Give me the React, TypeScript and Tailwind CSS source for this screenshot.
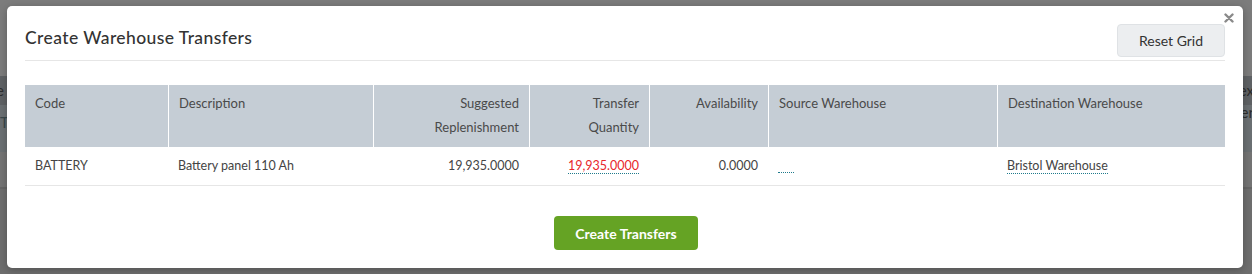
import React from "react";

const font = { fontFamily: '"Lato", "Open Sans", sans-serif' };

const columns = [
  { key: "code", label: ["Code"], w: "w-[143px]", align: "text-left" },
  { key: "desc", label: ["Description"], w: "w-[205px]", align: "text-left" },
  { key: "sugg", label: ["Suggested", "Replenishment"], w: "w-[156px]", align: "text-right" },
  { key: "qty", label: ["Transfer", "Quantity"], w: "w-[120px]", align: "text-right" },
  { key: "avail", label: ["Availability"], w: "w-[119px]", align: "text-right" },
  { key: "src", label: ["Source Warehouse"], w: "w-[229px]", align: "text-left" },
  { key: "dest", label: ["Destination Warehouse"], w: "flex-1", align: "text-left" },
];

function Backdrop() {
  return (
    <div className="absolute inset-0 flex flex-col bg-[#7b7b7b]">
      <div className="h-[76px] bg-[#7c7c7c]" />
      <div className="flex h-[29px] items-center justify-between bg-[#5f6265] text-[15px] text-[#2d2d2d]">
        <span className="-ml-[4px]">e</span>
        <span className="-mr-[2px]">ex</span>
      </div>
      <div className="flex h-[47px] items-start justify-between bg-[#6b7073] pt-[6px] text-[15px] text-[#39474b]">
        <span>T</span>
        <span className="-mr-[2px] -mt-[10px] text-[#2d2d2d]">er</span>
      </div>
      <div className="h-[35px] bg-[#747474]" />
      <div className="h-[2px] bg-[#666]" />
      <div className="flex-1 bg-[#6e6e6e]" />
    </div>
  );
}

function CloseIcon() {
  return (
    <svg width="10" height="10" viewBox="0 0 10 10">
      <path d="M1.5 1.5 L8.5 8.5 M8.5 1.5 L1.5 8.5" stroke="#8a8a8a" strokeWidth="2.4" strokeLinecap="round" />
    </svg>
  );
}

export default function App() {
  return (
    <div className="relative h-[274px] w-[1252px] overflow-hidden" style={font}>
      <Backdrop />
      <div className="absolute left-[7px] top-[6px] flex h-[262px] w-[1236px] flex-col rounded-[5px] bg-white px-[18px] shadow-[0_2px_8px_rgba(0,0,0,0.25)]">
        <button className="absolute right-[9px] top-[7px] leading-none">
          <CloseIcon />
        </button>
        <div className="flex h-[55px] items-end justify-between border-b border-[#e6e6e6] pb-[3px]">
          <h1 className="pb-[6px] text-[17.5px] font-medium tracking-[0.4px] text-[#333]">
            Create Warehouse Transfers
          </h1>
          <button className="h-[33px] w-[108px] rounded-[4px] border border-[#dfe2e5] bg-[#eceef0] text-[14px] text-[#333]">
            Reset Grid
          </button>
        </div>

        <div className="mt-[24px] flex flex-col">
          <div className="flex h-[62px] bg-[#c5cdd5] text-[13px] leading-[24px] text-[#4a4a4a]">
            {columns.map((c, i) => (
              <div
                key={c.key}
                className={`${c.w} ${c.align} ${i > 0 ? "border-l border-white" : ""} px-[10px] pt-[6px]`}
              >
                {c.label.map((l) => (
                  <div key={l}>{l}</div>
                ))}
              </div>
            ))}
          </div>
          <div className="flex h-[39px] items-center border-b border-[#e6e6e6] text-[12.5px] text-[#444]">
            <div className="w-[143px] px-[10px]">BATTERY</div>
            <div className="w-[205px] px-[10px]">Battery panel 110 Ah</div>
            <div className="w-[156px] px-[10px] text-right">19,935.0000</div>
            <div className="w-[120px] px-[10px] text-right">
              <span className="border-b border-dotted border-[#1f7a8c] text-[#e8262b]">19,935.0000</span>
            </div>
            <div className="w-[119px] px-[10px] text-right">0.0000</div>
            <div className="w-[229px] px-[10px]">
              <span className="inline-block h-[14px] w-[16px] border-b border-dotted border-[#1f7a8c] align-middle" />
            </div>
            <div className="flex-1 px-[10px]">
              <span className="border-b border-dotted border-[#1f7a8c]">Bristol Warehouse</span>
            </div>
          </div>
        </div>

        <div className="mt-[30px] flex justify-center">
          <button className="ml-[2px] h-[34px] w-[144px] rounded-[4px] bg-[#65a324] text-[14px] font-bold text-white">
            Create Transfers
          </button>
        </div>
      </div>
    </div>
  );
}
